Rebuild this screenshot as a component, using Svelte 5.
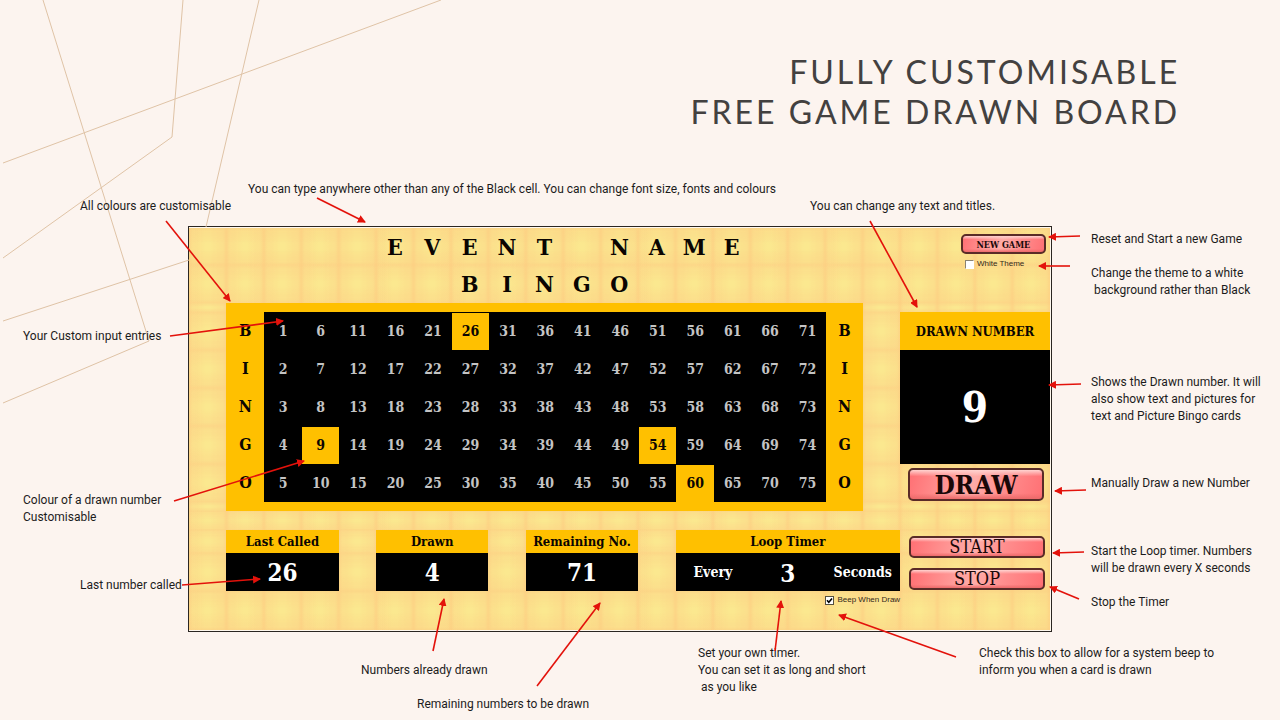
<script>
  const letters = ['B', 'I', 'N', 'G', 'O'];
  const columns = Array.from({ length: 15 }, (_, i) => i);
  const drawn = [26, 9, 54, 60];
  const bands = Array.from({ length: 13 }, (_, i) => i + 1);
  const pct = (x) => (x / 1280) * 100;

  // Column and row of each heading letter on the sheet.
  const heading = [
    ...[...'EVENT'].map((c, i) => ({ c, col: 6 + i, row: 1 })),
    ...[...'NAME'].map((c, i) => ({ c, col: 12 + i, row: 1 })),
    ...letters.map((c, i) => ({ c, col: 8 + i, row: 2 }))
  ];

  const stats = [
    { label: 'Last Called', value: '26', col: 2 },
    { label: 'Drawn', value: '4', col: 6 },
    { label: 'Remaining No.', value: '71', col: 10 }
  ];

  const notes = [
    { x: 248, y: 181, text: 'You can type anywhere other than any of the Black cell. You can change font size, fonts and colours' },
    { x: 80, y: 198, text: 'All colours are customisable' },
    { x: 810, y: 198, text: 'You can change any text and titles.' },
    { x: 23, y: 328, text: 'Your Custom input entries' },
    { x: 23, y: 492, text: 'Colour of a drawn number\nCustomisable' },
    { x: 80, y: 577, text: 'Last number called' },
    { x: 361, y: 662, text: 'Numbers already drawn' },
    { x: 417, y: 696, text: 'Remaining numbers to be drawn' },
    { x: 698, y: 645, text: 'Set your own timer.\nYou can set it as long and short\n as you like' },
    { x: 979, y: 645, text: 'Check this box to allow for a system beep to\ninform you when a card is drawn' },
    { x: 1091, y: 231, text: 'Reset and Start a new Game' },
    { x: 1091, y: 265, text: 'Change the theme to a white\n background rather than Black' },
    { x: 1091, y: 374, text: 'Shows the Drawn number. It will\nalso show text and pictures for\ntext and Picture Bingo cards' },
    { x: 1091, y: 475, text: 'Manually Draw a new Number' },
    { x: 1091, y: 543, text: 'Start the Loop timer. Numbers\nwill be drawn every X seconds' },
    { x: 1091, y: 594, text: 'Stop the Timer' }
  ];

  const arrows = [
    [317, 198, 365, 222], [166, 221, 230, 301], [170, 336, 283, 321],
    [870, 221, 917, 307], [1080, 236, 1049, 237], [1070, 266, 1039, 266],
    [1081, 384, 1049, 385], [1086, 490, 1055, 491], [1084, 552, 1053, 553],
    [1079, 599, 1050, 587], [174, 501, 304, 461], [182, 585, 260, 579],
    [433, 651, 444, 599], [537, 686, 600, 603], [775, 651, 781, 601],
    [956, 657, 839, 615]
  ];
</script>

<main class="slide">
  <svg class="layer" viewBox="0 0 1280 720" preserveAspectRatio="none" aria-hidden="true">
    <g fill="none" stroke="#dfc3a6" stroke-width="1">
      <path d="M43 0 149 341 3 403" />
      <path d="M183 0 172 137 3 258" />
      <path d="M259 0 206 227" />
      <path d="M441 0 3 163" />
      <path d="M3 321 189 260" />
    </g>
  </svg>

  <h1>Fully Customisable<br />Free Game Drawn Board</h1>

  <section class="board" aria-label="Bingo board">
    {#each bands as row}
      <div class="band" style="grid-row: {row}"></div>
    {/each}

    {#each heading as h}
      <span class="heading" style="grid-column: {h.col}; grid-row: {h.row}">{h.c}</span>
    {/each}

    <div class="tools">
      <button type="button" class="btn small">NEW GAME</button>
      <label class="check"><input type="checkbox" />White Theme</label>
    </div>

    <div class="frame">
      <table>
        <tbody>
          {#each letters as letter, r}
            <tr>
              <th scope="row">{letter}</th>
              {#each columns as c}
                <td class:hit={drawn.includes(c * 5 + r + 1)}>{c * 5 + r + 1}</td>
              {/each}
              <th>{letter}</th>
            </tr>
          {/each}
        </tbody>
      </table>
    </div>

    <div class="drawn-title">DRAWN NUMBER</div>
    <output class="drawn-value">9</output>
    <div class="draw"><button type="button" class="btn big">DRAW</button></div>

    {#each stats as s}
      <div class="stat" style="grid-column: {s.col} / span 3">
        <div class="label">{s.label}</div>
        <div class="value">{s.value}</div>
      </div>
    {/each}

    <div class="stat timer">
      <div class="label">Loop Timer</div>
      <label class="every">
        <span>Every</span>
        <input type="text" value="3" />
        <span>Seconds</span>
      </label>
    </div>

    <div class="run">
      <button type="button" class="btn">START</button>
      <button type="button" class="btn">STOP</button>
    </div>

    <label class="check beep"><input type="checkbox" checked />Beep When Draw</label>
  </section>

  {#each notes as n}
    <p class="note" style="left: {pct(n.x)}%; top: {n.y}px">{n.text}</p>
  {/each}

  <svg class="layer" viewBox="0 0 1280 720" preserveAspectRatio="none" aria-hidden="true">
    <defs>
      <marker id="head" viewBox="0 0 8 8" refX="7" refY="4" markerWidth="8" markerHeight="8" markerUnits="userSpaceOnUse" orient="auto">
        <path d="M0 0 8 4 0 8Z" fill="#e3120b" />
      </marker>
    </defs>
    {#each arrows as [x1, y1, x2, y2]}
      <line {x1} {y1} {x2} {y2} stroke="#e3120b" stroke-width="1.6" marker-end="url(#head)" />
    {/each}
  </svg>
</main>

<style>
  :global(body) {
    margin: 0;
    background: #fcf4ef;
  }
  .slide {
    position: relative;
    box-sizing: border-box;
    min-height: 100vh;
    padding: 52px 0 88px;
    overflow: hidden;
    font-family: Roboto, "Liberation Sans", sans-serif;
    color: #1c1c1c;
  }
  .layer {
    position: absolute;
    top: 0;
    left: 0;
    width: 100%;
    height: 720px;
    pointer-events: none;
  }
  h1 {
    margin: 0 7.8% 94px 0;
    font: 400 32px/40px Lato, sans-serif;
    letter-spacing: 3px;
    text-align: right;
    text-transform: uppercase;
    color: #434140;
  }
  .board {
    box-sizing: border-box;
    width: 67.5%;
    margin-left: 14.68%;
    padding: 1px 1px 1px 0;
    border: 1px solid #2b2622;
    background: #fff8ee;
    display: grid;
    grid-template-columns: repeat(23, minmax(0, 1fr));
    grid-template-rows: 37px 38px 9px repeat(5, 38px) 9px 19px 23px 38px 39px;
    font-family: "DejaVu Serif Condensed", "DejaVu Serif", serif;
    font-weight: 700;
    color: #0a0502;
  }
  .band {
    grid-column: 1 / -1;
    background-color: #fbe88f;
    background-image: linear-gradient(90deg, rgba(252, 205, 130, 0.75), rgba(252, 210, 134, 0.4) 8%, rgba(252, 211, 134, 0.3) 22%, rgba(252, 212, 136, 0) 45%, rgba(252, 212, 136, 0) 55%, rgba(252, 211, 134, 0.3) 78%, rgba(252, 210, 134, 0.4) 92%, rgba(252, 205, 130, 0.75)),
      linear-gradient(rgba(252, 208, 132, 0.7), rgba(252, 210, 134, 0.4) 8%, rgba(252, 211, 134, 0.3) 22%, rgba(252, 212, 136, 0) 45%, rgba(252, 212, 136, 0) 55%, rgba(252, 211, 134, 0.3) 78%, rgba(252, 210, 134, 0.4) 92%, rgba(252, 208, 132, 0.7));
    background-size: calc(100% / 23) 100%;
  }
  .heading {
    display: grid;
    place-items: center;
    font-size: 23px;
    line-height: 24px;
  }
  .tools {
    grid-column: 20 / -1;
    grid-row: 1 / 3;
    display: flex;
    flex-direction: column;
    align-items: flex-end;
    padding: 6px 4px 0 0;
    gap: 5px;
  }
  .btn {
    box-sizing: border-box;
    width: 100%;
    height: 22px;
    padding: 0;
    border: 2px solid #5a2b27;
    border-radius: 5px;
    background: linear-gradient(#ffd3d0 0, rgba(255, 200, 196, 0) 22%, rgba(255, 120, 120, 0) 80%, #ec6a6a 100%),
      linear-gradient(105deg, #ff7074, #ff8a8a 20%, #ffaca8 48%, #ff8e8e 70%, #ff7074);
    font: 400 18px/18px "DejaVu Serif Condensed", "DejaVu Serif", serif;
    color: #1a0808;
  }
  .btn.small {
    width: 85px;
    height: 20px;
    font-size: 9px;
    font-weight: 700;
  }
  .btn.big {
    height: 33px;
    font-size: 26px;
    line-height: 28px;
    font-weight: 700;
  }
  .check {
    display: flex;
    align-items: center;
    gap: 3px;
    font: 400 8px/10px "Liberation Sans", sans-serif;
    color: #33291a;
    white-space: nowrap;
  }
  .tools .check {
    width: 81px;
  }
  .check input {
    appearance: none;
    box-sizing: border-box;
    width: 9px;
    height: 9px;
    margin: 0;
    border: 1px solid #8a8271;
    border-right-color: #fff;
    border-bottom-color: #fff;
    background: #fff;
  }
  .check input:checked {
    border-color: #55503f;
    background: #fff url("data:image/svg+xml,%3Csvg xmlns='http://www.w3.org/2000/svg' viewBox='0 0 7 7'%3E%3Cpath d='M1 3.2 2.8 5.2 6 1.4' fill='none' stroke='%23000' stroke-width='1.6'/%3E%3C/svg%3E");
  }
  .beep {
    grid-column: 18 / 20;
    grid-row: 13;
    align-self: start;
    justify-self: end;
    padding-top: 4px;
  }
  .frame {
    grid-column: 2 / 19;
    grid-row: 3 / 10;
    padding: 9px 0;
    background: #ffc000;
  }
  table {
    width: 100%;
    table-layout: fixed;
    border-collapse: separate;
    border-spacing: 0;
  }
  th,
  td {
    box-sizing: border-box;
    height: 38px;
    padding: 0;
    text-align: center;
    font-size: 16px;
    line-height: 20px;
  }
  th:first-child {
    width: 6%;
  }
  th:last-child {
    width: 5.7%;
  }
  td {
    background: #000;
    color: #c4c4c4;
    font-size: 14px;
  }
  td.hit {
    box-shadow: inset 0 1px #000;
    background: #ffc000;
    color: #0a0502;
  }
  .drawn-title {
    grid-column: 20 / -1;
    grid-row: 4;
    display: grid;
    place-items: center;
    background: #ffc000;
    font-size: 13px;
  }
  .drawn-value {
    grid-column: 20 / -1;
    grid-row: 5 / 8;
    display: grid;
    place-items: center;
    background: #000;
    color: #fff;
    font-size: 42px;
  }
  .draw {
    grid-column: 20 / -1;
    grid-row: 8;
    padding: 4px 6px 0 8px;
  }
  .stat {
    grid-row: 11 / 13;
    display: grid;
    grid-template-rows: 23px 38px;
    text-align: center;
    background: #000;
  }
  .label {
    background: #ffc000;
    font-size: 13px;
    line-height: 23px;
    white-space: nowrap;
  }
  .value {
    color: #fff;
    font-size: 24px;
    line-height: 40px;
  }
  .timer {
    grid-column: 14 / 20;
  }
  .every {
    display: grid;
    grid-template-columns: repeat(3, minmax(0, 1fr));
    align-items: center;
    color: #fff;
    font-size: 14px;
    line-height: 20px;
  }
  .every input {
    width: 100%;
    box-sizing: border-box;
    padding: 3px 0 0;
    border: 0;
    background: none;
    color: inherit;
    font: inherit;
    font-size: 24px;
    line-height: 28px;
    text-align: center;
  }
  .run {
    grid-column: 20 / -1;
    grid-row: 11 / 13;
    display: flex;
    flex-direction: column;
    gap: 10px;
    padding: 6px 5px 1px 9px;
  }
  .note {
    position: absolute;
    margin: 0;
    font-size: 12px;
    line-height: 17px;
    white-space: pre;
  }
</style>
